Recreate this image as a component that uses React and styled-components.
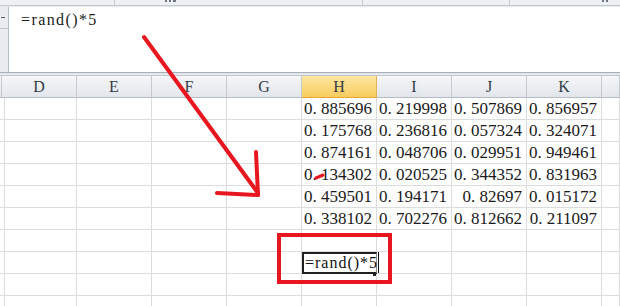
import React from "react";
import styled, { createGlobalStyle, css } from "styled-components";

const GlobalStyle = createGlobalStyle`
  html, body {
    margin: 0;
    padding: 0;
    background: #ffffff;
  }
`;

const serif = `"Liberation Serif", "DejaVu Serif", serif`;
const gridLine = "#dadcdd";

const Page = styled.div`
  position: relative;
  width: 620px;
  height: 306px;
  overflow: hidden;
  background: #fff;
  display: flex;
  flex-direction: column;
  font-family: ${serif};
`;

const Ribbon = styled.div`
  height: 5px;
  flex: none;
  display: grid;
  grid-template-columns: 115px 248px 147px 1fr;
  background: #eef1f4;
  border-bottom: 1px solid #c3c8cf;
`;

const RibbonGroup = styled.div`
  position: relative;
  border-right: 1px solid #c9cdd3;
  &:last-child {
    border-right: none;
  }
`;

const RibbonMark = styled.span`
  position: absolute;
  top: 0;
  left: ${(p) => p.left}px;
  width: ${(p) => p.w || 2}px;
  height: 2px;
  background: #6f7680;
`;

const FormulaBar = styled.div`
  height: 65px;
  flex: none;
  display: flex;
  border-top: 1px solid #e7eaee;
  border-bottom: 1px solid #a8afb8;
  box-shadow: inset 0 1px 0 #a8afb8;
`;

const NameGutter = styled.div`
  width: 8px;
  flex: none;
  background: #e9ecf0;
  border-right: 1px solid #b4bac2;
`;

const ExpandBox = styled.div`
  height: 21px;
  border-bottom: 1px solid #c3c8cf;
  display: flex;
  align-items: center;
  &::before {
    content: "";
    width: 4px;
    height: 1px;
    background: #565d66;
    margin-left: 1px;
  }
`;

const FormulaInput = styled.div`
  flex: 1;
  background: #fff;
  padding: 3px 0 0 12px;
  font-size: 16px;
  line-height: 20px;
  letter-spacing: 1.4px;
  color: #1c1c1c;
`;

const Spacer = styled.div`
  height: 2px;
  flex: none;
  background: #e4e7eb;
  border-bottom: 1px solid #c3c8cf;
`;

const Sheet = styled.div`
  flex: 1;
  display: grid;
  grid-template-columns: 2px repeat(8, 75px) 1fr;
  grid-auto-rows: 22px;
`;

const HeaderCell = styled.div`
  box-sizing: border-box;
  display: flex;
  align-items: center;
  justify-content: center;
  font-size: 16px;
  color: #333c48;
  padding-top: 1px;
  background: linear-gradient(#f5f6f8, #e2e6eb);
  border-right: 1px solid #c4c9d0;
  border-bottom: 1px solid #b6bcc4;
  ${(p) =>
    p.$active &&
    css`
      background: linear-gradient(#fde6a0, #f7cd5f);
      border-right-color: #e3b456;
      border-bottom-color: #e9a73a;
    `}
`;

const Cell = styled.div`
  box-sizing: border-box;
  position: relative;
  display: flex;
  align-items: center;
  justify-content: flex-end;
  padding-right: 4px;
  border-right: 1px solid ${gridLine};
  border-bottom: 1px solid ${gridLine};
  font-size: 17px;
  color: #1a1a1a;
  white-space: nowrap;
`;

const Dot = styled.span`
  display: inline-block;
  width: 8.5px;
`;

const EditCell = styled.div`
  box-sizing: border-box;
  position: relative;
  display: flex;
  align-items: center;
  padding-left: 1px;
  border: 2px solid #202020;
  border-right: 1px solid #8a8a8a;
  font-size: 16px;
  letter-spacing: 1px;
  color: #111;
  white-space: nowrap;
  &::after {
    content: "";
    position: absolute;
    top: -2px;
    bottom: -2px;
    right: -3px;
    width: 1px;
    background: #111;
  }
  &::before {
    content: "";
    position: absolute;
    right: -1px;
    bottom: -4px;
    width: 4px;
    height: 3px;
    background: #202020;
  }
`;

const RedFrame = styled.div`
  position: absolute;
  left: 277px;
  top: 233px;
  width: 115px;
  height: 51px;
  box-sizing: border-box;
  border: 4px solid #e8161f;
  pointer-events: none;
`;

const Annotation = styled.svg`
  position: absolute;
  left: 0;
  top: 0;
  pointer-events: none;
`;

const columns = ["", "D", "E", "F", "G", "H", "I", "J", "K", ""];

const data = [
  ["0.885696", "0.219998", "0.507869", "0.856957"],
  ["0.175768", "0.236816", "0.057324", "0.324071"],
  ["0.874161", "0.048706", "0.029951", "0.949461"],
  ["0.134302", "0.020525", "0.344352", "0.831963"],
  ["0.459501", "0.194171", "0.82697", "0.015172"],
  ["0.338102", "0.702276", "0.812662", "0.211097"],
];

const ROWS = 10;
const EDIT_ROW = 7;

function Num({ value }) {
  const [a, b] = value.split(".");
  return (
    <span>
      {a}
      <Dot>.</Dot>
      {b}
    </span>
  );
}

function SheetRow({ index }) {
  const values = data[index] || [];
  return columns.map((_, c) => {
    if (index === EDIT_ROW && c === 5) {
      return <EditCell key={c}>=rand()*5</EditCell>;
    }
    const v = c >= 5 && c <= 8 ? values[c - 5] : null;
    return <Cell key={c}>{v && <Num value={v} />}</Cell>;
  });
}

export default function App() {
  return (
    <>
      <GlobalStyle />
      <Page>
        <Ribbon>
          <RibbonGroup />
          <RibbonGroup>
            <RibbonMark left={50} />
            <RibbonMark left={54} />
            <RibbonMark left={58} w={3} />
          </RibbonGroup>
          <RibbonGroup />
          <RibbonGroup>
            <RibbonMark left={92} />
            <RibbonMark left={96} />
          </RibbonGroup>
        </Ribbon>
        <FormulaBar>
          <NameGutter>
            <ExpandBox />
          </NameGutter>
          <FormulaInput>=rand()*5</FormulaInput>
        </FormulaBar>
        <Spacer />
        <Sheet>
          {columns.map((col, i) => (
            <HeaderCell key={i} $active={col === "H"}>
              {col}
            </HeaderCell>
          ))}
          {Array.from({ length: ROWS }, (_, r) => (
            <SheetRow key={r} index={r} />
          ))}
        </Sheet>
        <RedFrame />
        <Annotation width="620" height="306" viewBox="0 0 620 306">
          <g
            stroke="#e8161f"
            strokeWidth="4"
            strokeLinecap="round"
            fill="none"
          >
            <line x1="144" y1="37" x2="258" y2="193" />
            <line x1="256" y1="152" x2="258" y2="195" />
            <line x1="217" y1="193" x2="258" y2="195" />
            <line x1="316" y1="178" x2="323" y2="175" strokeWidth="3" />
          </g>
        </Annotation>
      </Page>
    </>
  );
}
